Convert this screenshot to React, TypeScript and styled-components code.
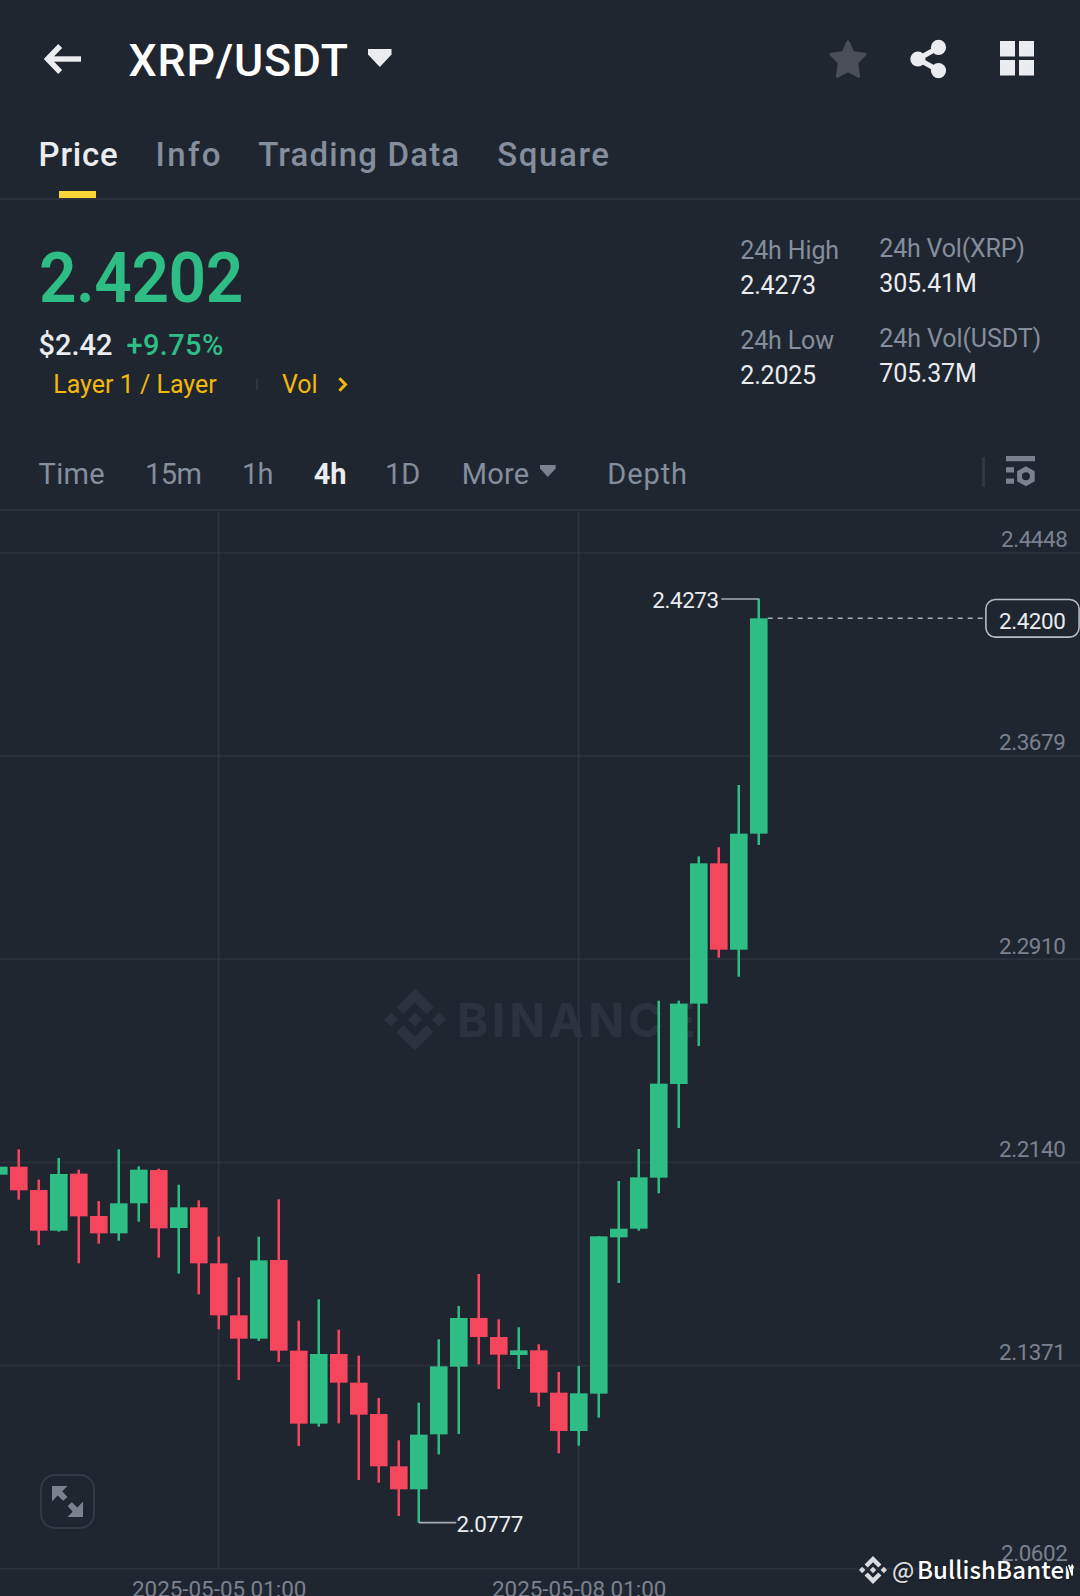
import React from 'react';
import styled, { createGlobalStyle } from 'styled-components';

const color = {
  bg: '#202630',
  line: '#2b313b',
  text: '#eaecef',
  muted: '#848e9c',
  faint: '#7b818e',
  up: '#2ebd85',
  down: '#f6465d',
  brand: '#f0b90b',
};

const GlobalStyle = createGlobalStyle`
  body {
    margin: 0;
    background: ${color.bg};
    overflow: hidden;
  }
`;

const Page = styled.main`
  display: flex;
  flex-direction: column;
  width: 1080px;
  height: 1596px;
  overflow: hidden;
  background: ${color.bg};
  color: ${color.text};
  font-family: Roboto, 'Liberation Sans', sans-serif;
  white-space: nowrap;

  svg {
    display: block;
    flex: none;
  }
`;

/* ---------- header ---------- */

const Header = styled.header`
  display: flex;
  align-items: center;
  height: 118px;
  padding: 0 46px 0 44px;
  box-sizing: border-box;
`;

const Pair = styled.h1`
  margin: 4px 0 0 47.5px;
  width: 239px;
  font-size: 44.6px;
  line-height: 56px;
  font-weight: 500;
  letter-spacing: 0.85px;
  color: #fff;
`;

const Actions = styled.div`
  display: flex;
  align-items: center;
  margin-left: auto;
`;

const ActionIcon = styled.div<{ $gap?: number; $lift?: number }>`
  margin-left: ${(p) => p.$gap ?? 0}px;
  margin-bottom: ${(p) => p.$lift ?? 0}px;
`;

/* ---------- tabs ---------- */

const Tabs = styled.nav`
  display: grid;
  grid-template-columns: 117px 102.6px 239px auto;
  justify-content: start;
  height: 80px;
  padding: 15px 0 0 38.6px;
  box-sizing: border-box;
`;

const Tab = styled.div<{ $active?: boolean; $tracking: number }>`
  font-size: 33px;
  line-height: 44px;
  font-weight: 500;
  letter-spacing: ${(p) => p.$tracking}px;
  color: ${(p) => (p.$active ? color.text : color.muted)};
`;

const TabMark = styled.div`
  width: 37px;
  height: 8px;
  margin: 14px 0 0 20.4px;
  background: #fcd535;
`;

const Rule = styled.div`
  height: 2px;
  background: ${color.line};
`;

/* ---------- price summary ---------- */

const Summary = styled.section`
  display: flex;
  justify-content: space-between;
  height: 238px;
  box-sizing: border-box;
`;

const Quote = styled.div`
  padding: 42.5px 0 0 38.6px;
`;

const LastPrice = styled.div`
  width: 220px;
  margin-left: 0.6px;
  font-size: 70px;
  line-height: 70px;
  font-weight: 600;
  letter-spacing: -0.5px;
  color: ${color.up};
  transform: scaleX(0.94);
  transform-origin: left center;
`;

const ChangeRow = styled.div`
  display: grid;
  grid-template-columns: 87.8px auto;
  margin-top: 14px;
  font-size: 29px;
  line-height: 36px;
  font-weight: 500;
`;

const Change = styled.span`
  letter-spacing: 0.4px;
  color: ${color.up};
`;

const TagRow = styled.div`
  display: grid;
  grid-template-columns: 202.8px 26px 56px auto;
  align-items: center;
  margin: 7px 0 0 14.6px;
  font-size: 25px;
  line-height: 30px;
  color: ${color.brand};
`;

const TagDivider = styled.span`
  width: 2.5px;
  height: 11px;
  background: #2f3642;
`;

const Stats = styled.div`
  display: grid;
  grid-template-columns: 139px 200.7px;
`;

const StatColumn = styled.div<{ $top: number }>`
  display: flex;
  flex-direction: column;
  gap: 20px;
  padding-top: ${(p) => p.$top}px;
`;

const Stat = styled.div`
  font-size: 25px;
  line-height: 35px;
`;

const StatLabel = styled.div<{ $tracking?: number }>`
  letter-spacing: ${(p) => p.$tracking ?? -0.15}px;
  color: ${color.muted};
`;

const StatValue = styled.div`
  letter-spacing: -0.2px;
`;

/* ---------- interval bar ---------- */

const Intervals = styled.nav`
  display: grid;
  grid-template-columns: 106.4px 97px 71.7px 71.3px 76.8px 78.5px 67px 374.7px 24px auto;
  align-items: center;
  justify-content: start;
  height: 71px;
  padding-left: 38.6px;
  box-sizing: border-box;
`;

const Interval = styled.span<{ $active?: boolean; $tracking?: number }>`
  font-size: 29px;
  line-height: 36px;
  font-weight: ${(p) => (p.$active ? 700 : 400)};
  letter-spacing: ${(p) => p.$tracking ?? 0}px;
  color: ${(p) => (p.$active ? color.text : color.muted)};
`;

const IntervalDivider = styled.span`
  width: 3px;
  height: 30px;
  margin-top: -3px;
  background: #313844;
`;

const LiftedIcon = styled.div<{ $by: number }>`
  margin-top: -${(p) => p.$by}px;
`;

/* ---------- chart ---------- */

const ChartArea = styled.section`
  position: relative;
  width: 1080px;
  height: 1085px;
`;

const ExpandButton = styled.button`
  position: absolute;
  left: 40px;
  top: 962.5px;
  display: grid;
  place-items: center;
  width: 55px;
  height: 55px;
  padding: 0;
  border: 2px solid #333a46;
  border-radius: 15px;
  background: transparent;
`;

const Author = styled.div`
  position: absolute;
  left: 859px;
  top: 1040px;
  display: flex;
  align-items: center;
  width: 215px;
  height: 38px;
  overflow: hidden;
  color: #fff;
  font-family: 'Noto Sans CJK SC', 'Noto Sans', sans-serif;
  font-size: 24px;
  font-weight: 500;
  line-height: 38px;
  text-shadow: 1px 1px 2px rgba(0, 0, 0, 0.5);
`;

const AtSign = styled.span`
  width: 25px;
  margin: -3px 0 0 5px;
  font-size: 23px;
  color: #d9dbde;
`;

const AuthorName = styled.span`
  margin-top: -2px;
  letter-spacing: 0.1px;
`;

const AuthorEdge = styled.div`
  position: absolute;
  right: 0;
  top: 12px;
`;

// [high, body top, body bottom, low, rising]
type Candle = [number, number, number, number, boolean];

const at = (origin: number, rows: [number, number, number, number, 0 | 1][]): Candle[] =>
  rows.map(([h, t, b, l, up]) => [origin + h / 3, origin + t / 3, origin + b / 3, origin + l / 3, up === 1]);

const candles: Candle[] = [
  ...at(1120, [
    [140, 140, 164, 164, 1],
    [88, 140, 211, 239, 0],
    [179, 210, 332, 375, 0],
    [114, 162, 332, 335, 1],
    [149, 161, 289, 430, 0],
    [243, 288, 340, 371, 0],
    [88, 250, 340, 362, 1],
    [139, 149, 250, 305, 1],
    [146, 150, 325, 413, 0],
    [194, 262, 324, 461, 1],
    [241, 262, 430, 523, 0],
    [350, 430, 586, 628, 0],
    [472, 586, 656, 780, 0],
    [350, 421, 656, 663, 1],
    [238, 420, 692, 726, 0],
    [602, 692, 911, 978, 0],
    [538, 702, 911, 920, 1],
    [629, 702, 788, 910, 0],
  ]),
  ...at(1230, [
    [377, 458, 554, 750, 0],
    [504, 552, 709, 758, 0],
    [631, 709, 778, 858, 0],
    [518, 614, 778, 878, 1],
    [328, 409, 613, 673, 1],
    [228, 264, 410, 612, 1],
    [132, 264, 321, 403, 0],
    [268, 321, 374, 477, 0],
    [292, 361, 375, 417, 1],
    [343, 361, 488, 530, 0],
    [426, 488, 603, 670, 0],
    [408, 490, 603, 647, 1],
    [19, 19, 491, 563, 1],
    [-147, -4, 22, 159, 1],
  ]),
  ...at(940, [
    [627, 712, 866, 872, 1],
    [182, 431, 713, 760, 1],
    [182, 191, 432, 564, 1],
    [-251, -230, 191, 318, 1],
  ]),
  ...at(560, [
    [862, 910, 1169, 1193, 0],
    [675, 821, 1169, 1250, 1],
    [116, 175, 821, 855, 1],
  ]),
];

const gridRows = [552.8, 756, 959.1, 1162.3, 1365.6, 1568.7];
const gridColumns = [218.7, 578.7];

const scale: [string, number, number][] = [
  ['2.4448', 1001, 539.2],
  ['2.3679', 999, 742.2],
  ['2.2910', 999, 946.2],
  ['2.2140', 999, 1149.4],
  ['2.1371', 999, 1352.4],
  ['2.0602', 1001, 1553.2],
];

const ChartText = styled.text<{ $tone?: 'muted' | 'bright'; $tracking?: number }>`
  font-family: Roboto, 'Liberation Sans', sans-serif;
  font-size: 22.4px;
  letter-spacing: ${(p) => p.$tracking ?? -0.4}px;
  fill: ${(p) => (p.$tone === 'bright' ? color.text : color.faint)};
`;

const BrandText = styled.text`
  font-family: Inter, 'Liberation Sans', sans-serif;
  font-size: 47px;
  font-weight: 700;
  letter-spacing: 4px;
  fill: #2d333e;
`;

const BrandMark = ({ size, fill, x, y }: { size: number; fill: string; x?: number; y?: number }) => (
  <svg x={x} y={y} width={size} height={size} viewBox="0 0 62 62" fill={fill}>
    <path d="M31 0 49.7 18.7 42.7 25.7 31 14 19.3 25.7 12.3 18.7Z" />
    <path d="M31 62 49.7 43.3 42.7 36.3 31 48 19.3 36.3 12.3 43.3Z" />
    <path d="M31 24 38 31 31 38 24 31Z" />
    <path d="M7 24 14 31 7 38 0 31Z" />
    <path d="M55 24 62 31 55 38 48 31Z" />
  </svg>
);

const Chart = () => (
  <svg width="1080" height="1085" viewBox="0 511 1080 1085">
    <g stroke={color.line} strokeWidth="1.8">
      {gridRows.map((y) => (
        <line key={y} x1="0" x2="1080" y1={y} y2={y} />
      ))}
    </g>
    <BrandMark x={384} y={988.6} size={62} fill="#2d333e" />
    <BrandText x="457" y="1037">BINANCE</BrandText>
    <g stroke="#303641" strokeWidth="1.6">
      {gridColumns.map((x) => (
        <line key={x} x1={x} x2={x} y1="511" y2="1568.7" />
      ))}
    </g>
    {candles.map(([high, top, bottom, low, up], i) => {
      const x = -1.3 + i * 20;
      return (
        <g key={i} fill={up ? color.up : color.down}>
          <rect x={x - 1.2} y={high} width="2.5" height={low - high} />
          <rect x={x - 8.7} y={top} width="17.6" height={bottom - top} />
        </g>
      );
    })}
    <g stroke="#a9adb6" strokeWidth="1.6" fill="none">
      <path d="M721.3 599H758.7" />
      <path d="M418.7 1522.6H456.3" />
      <path d="M767.7 618.3H984" strokeDasharray="5 5" />
      <rect x="985.9" y="599.5" width="93.2" height="37.6" rx="9.5" stroke="#b9bcc4" />
    </g>
    <ChartText $tone="bright" x="652.3" y="607.6">2.4273</ChartText>
    <ChartText $tone="bright" x="456.5" y="1531.5">2.0777</ChartText>
    <ChartText $tone="bright" x="999" y="629.3">2.4200</ChartText>
    {scale.map(([label, x, y]) => (
      <ChartText key={label} x={x} y={y + 8}>{label}</ChartText>
    ))}
    <ChartText $tracking={0} x="132" y="1596.5">2025-05-05 01:00</ChartText>
    <ChartText $tracking={0} x="492" y="1596.5">2025-05-08 01:00</ChartText>
  </svg>
);

export default function App() {
  return (
    <Page>
      <GlobalStyle />
      <Header>
        <svg width="37" height="30" viewBox="0 0 37 30" fill="none" stroke={color.text} strokeWidth="5.4">
          <path d="M37 15H5" />
          <path d="M16.2 2 3.6 15 16.2 28" />
        </svg>
        <Pair>XRP/USDT</Pair>
        <LiftedIcon $by={2}>
          <svg width="24" height="18" viewBox="0 0 24 18" fill={color.text}>
            <path d="M0 0H23.5V5.5L11.8 18 0 5.5Z" />
          </svg>
        </LiftedIcon>
        <Actions>
          <svg width="38" height="40" viewBox="0 0 38 40" fill="#4a4e59" stroke="#4a4e59" strokeWidth="3" strokeLinejoin="round">
            <path d="M19 3 24 13.8 36 15.2 27.6 23.6 29.6 37.2 19 31.6 8.4 37.2 10.4 23.6 2 15.2 14 13.8Z" />
          </svg>
          <ActionIcon $gap={43} $lift={1}>
            <svg width="37" height="40" viewBox="0 0 37 40" fill={color.text}>
              <path d="M28.5 8.5 8 20 28.5 31.5" fill="none" stroke={color.text} strokeWidth="5" />
              <circle cx="28.5" cy="8.4" r="7.6" />
              <circle cx="7.9" cy="20" r="7.6" />
              <circle cx="28.5" cy="31.6" r="7.6" />
            </svg>
          </ActionIcon>
          <ActionIcon $gap={53} $lift={1}>
            <svg width="34" height="35" viewBox="0 0 34 35" fill={color.text}>
              <path d="M0 0H15V15.5H0ZM19 0H34V15.5H19ZM0 19H15V34.5H0ZM19 19H34V34.5H19Z" />
            </svg>
          </ActionIcon>
        </Actions>
      </Header>

      <Tabs>
        <Tab $active $tracking={0.75}>
          Price
          <TabMark />
        </Tab>
        <Tab $tracking={2.3}>Info</Tab>
        <Tab $tracking={1.15}>Trading Data</Tab>
        <Tab $tracking={1.6}>Square</Tab>
      </Tabs>
      <Rule />

      <Summary>
        <Quote>
          <LastPrice>2.4202</LastPrice>
          <ChangeRow>
            <span>$2.42</span>
            <Change>+9.75%</Change>
          </ChangeRow>
          <TagRow>
            <span>Layer 1 / Layer</span>
            <TagDivider />
            <span>Vol</span>
            <svg width="10" height="15" viewBox="0 0 10 15" fill="none" stroke={color.brand} strokeWidth="3">
              <path d="M1.4 1.2 7.5 7.5 1.4 13.8" />
            </svg>
          </TagRow>
        </Quote>
        <Stats>
          <StatColumn $top={32.6}>
            <Stat>
              <StatLabel>24h High</StatLabel>
              <StatValue>2.4273</StatValue>
            </Stat>
            <Stat>
              <StatLabel>24h Low</StatLabel>
              <StatValue>2.2025</StatValue>
            </Stat>
          </StatColumn>
          <StatColumn $top={30.6}>
            <Stat>
              <StatLabel $tracking={-0.2}>24h Vol(XRP)</StatLabel>
              <StatValue>305.41M</StatValue>
            </Stat>
            <Stat>
              <StatLabel $tracking={-0.1}>24h Vol(USDT)</StatLabel>
              <StatValue>705.37M</StatValue>
            </Stat>
          </StatColumn>
        </Stats>
      </Summary>

      <Intervals>
        <Interval $tracking={0.3}>Time</Interval>
        <Interval $tracking={-0.5}>15m</Interval>
        <Interval $tracking={-0.8}>1h</Interval>
        <Interval $active $tracking={-0.1}>4h</Interval>
        <Interval>1D</Interval>
        <Interval $tracking={0.2}>More</Interval>
        <LiftedIcon $by={5}>
          <svg width="16" height="12" viewBox="0 0 16 12" fill={color.faint}>
            <path d="M0 0H15.6V3.5L7.8 12 0 3.5Z" />
          </svg>
        </LiftedIcon>
        <Interval $tracking={0.9}>Depth</Interval>
        <IntervalDivider />
        <LiftedIcon $by={4}>
          <svg width="29" height="31" viewBox="0 0 29 31" fill={color.faint}>
            <path d="M0 0H29V5.3H0ZM0 11.3H8V16.4H0ZM0 22.6H8V27.8H0Z" />
            <path
              fillRule="evenodd"
              d="M19.9 10.2 28.7 15.2V25.2L19.9 30.2 11.1 25.2V15.2ZM19.9 16.2A4 4 0 1 0 19.9 24.2 4 4 0 1 0 19.9 16.2Z"
            />
          </svg>
        </LiftedIcon>
      </Intervals>
      <Rule />

      <ChartArea>
        <Chart />
        <ExpandButton aria-label="Full screen">
          <svg width="31" height="31" viewBox="0 0 31 31" fill={color.faint}>
            <path d="M0 0H15.5L10.3 5.2 15.4 10.9 11.2 14.8 5.6 9.6 0 15.5Z" />
            <path d="M31 31H15.5L20.7 25.8 15.6 20.1 19.8 16.2 25.4 21.4 31 15.5Z" />
          </svg>
        </ExpandButton>
        <Author>
          <BrandMark size={28} fill="#d9dbde" />
          <AtSign>@</AtSign>
          <AuthorName>BullishBanter</AuthorName>
          <AuthorEdge>
            <svg width="9" height="14" viewBox="0 0 9 14" fill="none">
              <path d="M2 1 6 13" stroke={color.bg} strokeWidth="1.8" />
              <path d="M3.8 2 7.2 12.5V1.5" stroke="#fff" strokeWidth="1.6" />
            </svg>
          </AuthorEdge>
        </Author>
      </ChartArea>
    </Page>
  );
}
